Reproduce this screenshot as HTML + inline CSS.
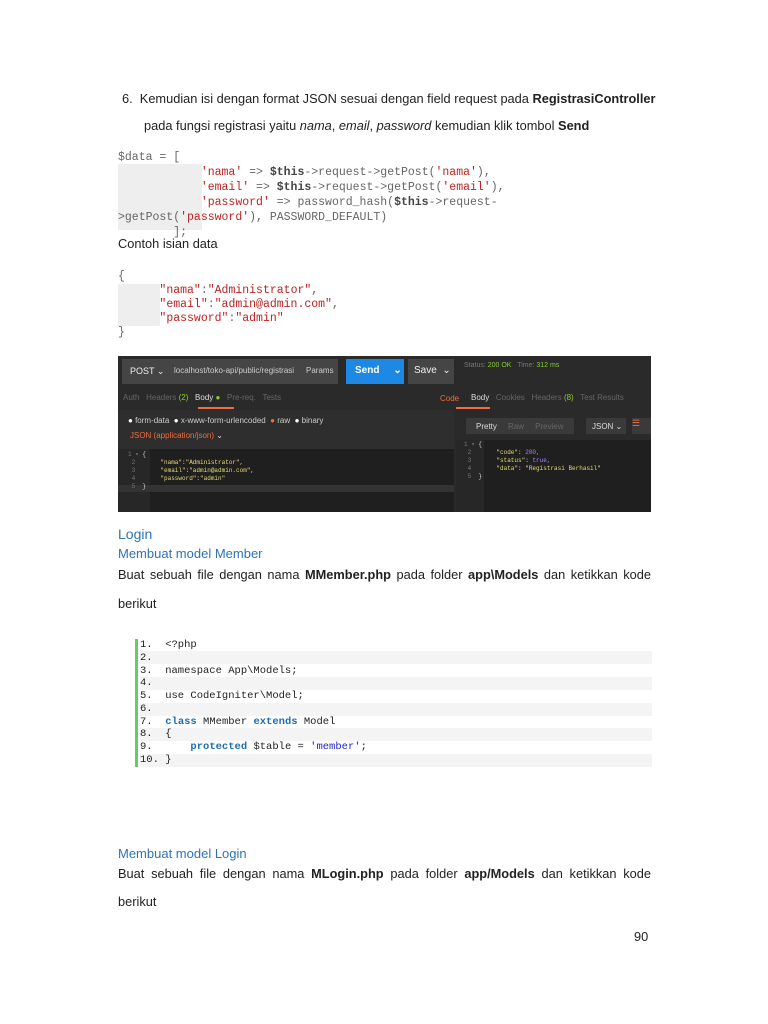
<!DOCTYPE html>
<html><head><meta charset="utf-8"><style>
body{margin:0;width:768px;height:1024px;background:#fff;position:relative;font-family:"Liberation Sans",sans-serif;color:#222;overflow:hidden}
.a{position:absolute;white-space:pre}
.t{font-size:12.8px}
.j{position:absolute;white-space:normal;text-align:justify;text-align-last:justify;font-size:12.8px}
.m{font-family:"Liberation Mono",monospace;font-size:11.5px;color:#666}
.r{color:#b22}
.g{background:#eee}
.h{color:#2e74b5;font-size:13px}
.pm{font-family:"Liberation Mono",monospace;font-size:10.5px;color:#222}
.row{position:absolute;left:140px;width:512px;height:12.6px}
</style></head><body>
<div class="a t" style="left:122px;top:91px">6.  Kemudian isi dengan format JSON sesuai dengan field request pada <b>RegistrasiController</b></div>
<div class="a t" style="left:144px;top:118px">pada fungsi registrasi yaitu <i>nama</i>, <i>email</i>, <i>password</i> kemudian klik tombol <b>Send</b></div>

<div class="a g" style="left:118px;top:164px;width:84px;height:66px"></div>
<div class="a m" style="left:118px;top:150px;line-height:15px">$data = [
            <span class="r">'nama'</span> =&gt; <b style="color:#444">$this</b>-&gt;request-&gt;getPost(<span class="r">'nama'</span>),
            <span class="r">'email'</span> =&gt; <b style="color:#444">$this</b>-&gt;request-&gt;getPost(<span class="r">'email'</span>),
            <span class="r">'password'</span> =&gt; password_hash(<b style="color:#444">$this</b>-&gt;request-
&gt;getPost(<span class="r">'password'</span>), PASSWORD_DEFAULT)
        ];</div>
<div class="a t" style="left:118px;top:236px">Contoh isian data</div>
<div class="a g" style="left:118px;top:284px;width:42px;height:42px"></div>
<div class="a m" style="left:118px;top:270px;line-height:14px">{
      <span class="r">"nama"</span>:<span class="r">"Administrator"</span>,
      <span class="r">"email"</span>:<span class="r">"admin@admin.com"</span>,
      <span class="r">"password"</span>:<span class="r">"admin"</span>
}</div>

<div class="a" style="left:118px;top:356px;width:533px;height:156px;background:#2a2a2a;font-size:8px;color:#aaa">
 <div class="a" style="left:4px;top:3px;width:216px;height:25px;background:#454545"></div>
 <div class="a" style="left:12px;top:10px;color:#eee;font-size:9px">POST ⌄</div>
 <div class="a" style="left:56px;top:10px;color:#ccc">localhost/toko-api/public/registrasi</div>
 <div class="a" style="left:188px;top:10px;color:#ccc">Params</div>
 <div class="a" style="left:228px;top:3px;width:58px;height:25px;background:#1e88e5"></div>
 <div class="a" style="left:237px;top:9px;color:#fff;font-size:10px;font-weight:bold">Send     ⌄</div>
 <div class="a" style="left:290px;top:3px;width:46px;height:25px;background:#454545"></div>
 <div class="a" style="left:296px;top:9px;color:#eee;font-size:10px">Save  ⌄</div>
 <div class="a" style="left:346px;top:6px;color:#777;font-size:7px">Status: <span style="color:#8c3">200 OK</span>   Time: <span style="color:#8c3">312 ms</span></div>
 <div class="a" style="left:5px;top:37px;color:#666">Auth   Headers <span style="color:#8c3">(2)</span>   <span style="color:#ddd">Body <span style="color:#8c3">●</span></span>   Pre-req.   Tests</div>
 <div class="a" style="left:80px;top:51px;width:36px;height:2px;background:#f26b3a"></div>
 <div class="a" style="left:322px;top:38px;color:#f26b3a">Code</div>
 <div class="a" style="left:353px;top:37px;color:#666"><span style="color:#ddd">Body</span>   Cookies   Headers <span style="color:#8c3">(8)</span>   Test Results</div>
 <div class="a" style="left:338px;top:51px;width:34px;height:2px;background:#f26b3a"></div>
 <div class="a" style="left:0;top:54px;width:336px;height:102px;background:#2e2e2e"></div>
 <div class="a" style="left:338px;top:54px;width:195px;height:102px;background:#2a2a2a"></div>
 <div class="a" style="left:10px;top:60px;color:#ccc"><span style="color:#fff">●</span> form-data  <span style="color:#fff">●</span> x-www-form-urlencoded  <span style="color:#f26b3a">●</span> raw  <span style="color:#fff">●</span> binary</div>
 <div class="a" style="left:12px;top:75px;color:#f26b3a">JSON (application/json) <span style="color:#ddd">⌄</span></div>
 <div class="a" style="left:0;top:93px;width:336px;height:63px;background:#1f1f1f"></div>
 <div class="a" style="left:0;top:93px;width:32px;height:63px;background:#272727"></div>
 <div class="a" style="left:0;top:129px;width:336px;height:7px;background:#333"></div>
 <div class="a pm" style="left:10px;top:95px;color:#777;font-size:6px;line-height:8px">1 ▾ <span style="color:#ddd">{</span>
 2       <span style="color:#e6db74">"nama":"Administrator",</span>
 3       <span style="color:#e6db74">"email":"admin@admin.com",</span>
 4       <span style="color:#e6db74">"password":"admin"</span>
 5  <span style="color:#ddd">}</span></div>
 <div class="a" style="left:348px;top:62px;width:108px;height:16px;background:#3a3a3a"></div>
 <div class="a" style="left:358px;top:66px;color:#ddd">Pretty     <span style="color:#666">Raw     Preview</span></div>
 <div class="a" style="left:468px;top:62px;width:40px;height:16px;background:#3a3a3a"></div>
 <div class="a" style="left:474px;top:66px;color:#ddd">JSON ⌄</div>
 <div class="a" style="left:514px;top:62px;width:19px;height:16px;background:#3a3a3a;color:#f26b3a;font-size:9px">☰</div>
 <div class="a" style="left:338px;top:84px;width:195px;height:72px;background:#1f1f1f"></div>
 <div class="a" style="left:338px;top:84px;width:28px;height:72px;background:#272727"></div>
 <div class="a pm" style="left:346px;top:85px;color:#777;font-size:6px;line-height:8px">1 ▾ <span style="color:#ddd">{</span>
 2       <span style="color:#e6db74">"code"</span><span style="color:#ddd">:</span> <span style="color:#ae81ff">200,</span>
 3       <span style="color:#e6db74">"status"</span><span style="color:#ddd">:</span> <span style="color:#ae81ff">true,</span>
 4       <span style="color:#e6db74">"data"</span><span style="color:#ddd">:</span> <span style="color:#e6db74">"Registrasi Berhasil"</span>
 5  <span style="color:#ddd">}</span></div>
</div>

<div class="a h" style="left:118px;top:526px;font-size:14px">Login</div>
<div class="a h" style="left:118px;top:546px">Membuat model Member</div>
<div class="j" style="left:118px;top:567px;width:533px">Buat sebuah file dengan nama <b>MMember.php</b> pada folder <b>app\Models</b> dan ketikkan kode</div>
<div class="a t" style="left:118px;top:596px">berikut</div>

<div class="a" style="left:135px;top:639px;width:3px;height:128px;background:#6c6"></div>
<div class="row" style="top:651px;background:#f4f4f4"></div>
<div class="row" style="top:677px;background:#f4f4f4"></div>
<div class="row" style="top:703px;background:#f4f4f4"></div>
<div class="row" style="top:728px;background:#f4f4f4"></div>
<div class="row" style="top:754px;background:#f4f4f4"></div>
<div class="a pm" style="left:140px;top:639px;line-height:12.75px">1.  &lt;?php
2.
3.  namespace App\Models;
4.
5.  use CodeIgniter\Model;
6.
7.  <b style="color:#1a6fb5">class</b> MMember <b style="color:#1a6fb5">extends</b> Model
8.  {
9.      <b style="color:#1a6fb5">protected</b> $table = <span style="color:#22c">'member'</span>;
10. }</div>

<div class="a h" style="left:118px;top:846px">Membuat model Login</div>
<div class="j" style="left:118px;top:866px;width:533px">Buat sebuah file dengan nama <b>MLogin.php</b> pada folder <b>app/Models</b> dan ketikkan kode</div>
<div class="a t" style="left:118px;top:894px">berikut</div>
<div class="a t" style="left:634px;top:929px">90</div>
</body></html>
